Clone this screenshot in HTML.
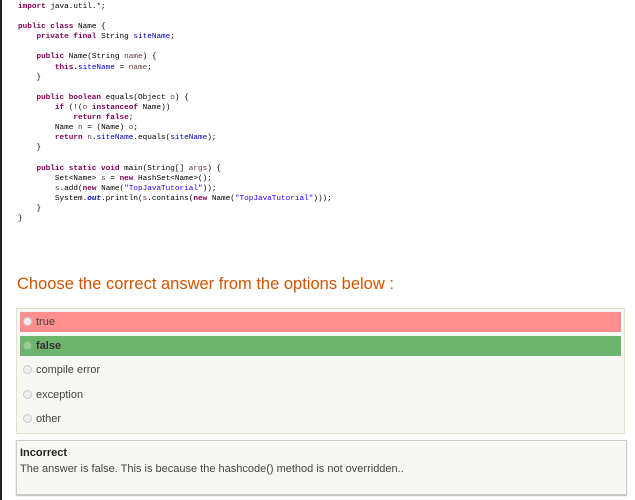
<!DOCTYPE html>
<html><head><style>
body{margin:0;width:635px;height:500px;background:#fff;position:relative;overflow:hidden;font-family:"Liberation Sans",sans-serif}
.lb{position:absolute;left:0;top:0;width:2px;height:500px;background:#222}
pre{position:absolute;left:18px;top:2px;margin:0;font-family:"Liberation Mono",monospace;font-size:7.7px;line-height:10.1px;color:#000;font-weight:bold}
.k{color:#7f0055}.f{color:#0000c0;font-weight:normal}.s{color:#2a00ff;font-weight:normal}.v{color:#6a3e3e;font-weight:normal}.n{font-weight:normal}
.q{position:absolute;left:17px;top:275px;font-size:16.5px;color:#d35400}
.box{position:absolute;left:16px;top:308px;width:607px;height:124px;border:1px solid #dfe3cc;background:#f7f8f3}
.opt{position:absolute;left:3px;width:601px;height:20px;font-size:11px;color:#444;line-height:20px}
.opt span{display:inline-block;width:7px;height:7px;border-radius:50%;border:1px solid #ccc;background:#eee;margin:0 4px 0 3px;vertical-align:-1px}
.fb{position:absolute;left:16px;top:440px;width:609px;height:53px;border:1px solid #ccc;background:#f7f8f3;box-shadow:0 1px 1px #bbb;font-size:11px;color:#444}
</style></head><body>
<div class="lb"></div>
<pre><span class="k">import</span> <span class="n">java.util.*;</span>

<span class="k">public class</span> <span class="n">Name {</span>
    <span class="k">private final</span> <span class="n">String</span> <span class="f">siteName</span><span class="n">;</span>

    <span class="k">public</span> <span class="n">Name(String</span> <span class="v">name</span><span class="n">) {</span>
        <span class="k">this</span>.<span class="f">siteName</span> <span class="n">=</span> <span class="v">name</span><span class="n">;</span>
    <span class="n">}</span>

    <span class="k">public boolean</span> <span class="n">equals(Object</span> <span class="v">o</span><span class="n">) {</span>
        <span class="k">if</span> <span class="n">(!(</span><span class="v">o</span> <span class="k">instanceof</span> <span class="n">Name))</span>
            <span class="k">return false</span><span class="n">;</span>
        <span class="n">Name</span> <span class="v">n</span> <span class="n">= (Name)</span> <span class="v">o</span><span class="n">;</span>
        <span class="k">return</span> <span class="v">n</span>.<span class="f">siteName</span><span class="n">.equals(</span><span class="f">siteName</span><span class="n">);</span>
    <span class="n">}</span>

    <span class="k">public static void</span> <span class="n">main(String[]</span> <span class="v">args</span><span class="n">) {</span>
        <span class="n">Set&lt;Name&gt;</span> <span class="v">s</span> <span class="n">=</span> <span class="k">new</span> <span class="n">HashSet&lt;Name&gt;();</span>
        <span class="v">s</span><span class="n">.add(</span><span class="k">new</span> <span class="n">Name(</span><span class="s">"TopJavaTutorial"</span><span class="n">));</span>
        <span class="n">System.</span><span class="f" style="font-style:italic;font-weight:bold">out</span><span class="n">.println(</span><span class="v">s</span><span class="n">.contains(</span><span class="k">new</span> <span class="n">Name(</span><span class="s">"TopJavaTutorial"</span><span class="n">)));</span>
    <span class="n">}</span>
<span class="n">}</span></pre>
<div class="q">Choose the correct answer from the options below :</div>
<div class="box">
<div class="opt" style="top:3px;background:#ff8f8f"><span></span>true</div>
<div class="opt" style="top:27px;background:#6db46d;font-weight:bold;color:#333"><span style="background:#9c9;border-color:#8b8"></span>false</div>
<div class="opt" style="top:51px"><span></span>compile error</div>
<div class="opt" style="top:76px"><span></span>exception</div>
<div class="opt" style="top:100px"><span></span>other</div>
</div>
<div class="fb"><div style="position:absolute;left:3px;top:6px;font-weight:bold;color:#222">Incorrect</div><div style="position:absolute;left:3px;top:22px">The answer is false. This is because the hashcode() method is not overridden..</div></div>
</body></html>
